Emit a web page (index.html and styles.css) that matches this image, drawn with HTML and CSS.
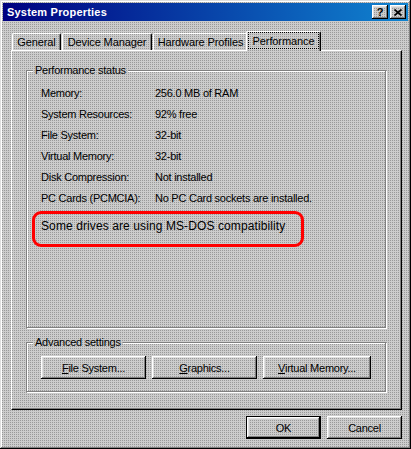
FILE: index.html
```html
<!DOCTYPE html>
<html lang="en">

<head>
	<title>System Properties</title>
	<link rel="stylesheet" href="styles.css">
</head>

<body>
	<div class="window">
		<!-- Title bar -->
		<div class="titlebar">
			<span class="title">System Properties</span>
			<div class="title-buttons">
				<button class="title-btn title-help">?</button>
				<button class="title-btn">
					<svg width="8" height="7" viewBox="0 0 8 7">
						<path d="M0.5 0.5 L7.5 6.5 M7.5 0.5 L0.5 6.5" stroke="#000" stroke-width="1.7" fill="none" />
					</svg>
				</button>
			</div>
		</div>

		<!-- Tabs -->
		<div class="tabs">
			<div class="tab tab-general">General</div>
			<div class="tab tab-device">Device Manager</div>
			<div class="tab tab-hardware">Hardware Profiles</div>
			<div class="tab tab-active"><span class="focus">Performance</span></div>
		</div>

		<!-- Tab panel -->
		<div class="panel">
			<!-- Performance status -->
			<fieldset class="group group-status">
				<legend>Performance status</legend>
				<div class="group-body">
					<div class="status-grid">
						<span>Memory:</span><span>256.0 MB of RAM</span>
						<span>System Resources:</span><span>92% free</span>
						<span>File System:</span><span>32-bit</span>
						<span>Virtual Memory:</span><span>32-bit</span>
						<span>Disk Compression:</span><span>Not installed</span>
						<span>PC Cards (PCMCIA):</span><span>No PC Card sockets are installed.</span>
					</div>
					<div class="notice">Some drives are using MS-DOS compatibility</div>
				</div>
			</fieldset>

			<!-- Advanced settings -->
			<fieldset class="group group-advanced">
				<legend>Advanced settings</legend>
				<div class="group-body btn-row">
					<button class="btn btn-setting"><u>F</u>ile System...</button>
					<button class="btn btn-setting"><u>G</u>raphics...</button>
					<button class="btn btn-setting btn-vm"><u>V</u>irtual Memory...</button>
				</div>
			</fieldset>
		</div>

		<!-- Dialog buttons -->
		<div class="footer">
			<button class="btn btn-dialog btn-default">OK</button>
			<button class="btn btn-dialog">Cancel</button>
		</div>
	</div>
</body>

</html>
```

FILE: styles.css
```css
* {
	box-sizing: border-box;
}

body {
	margin: 0;
	font-family: "Liberation Sans", Arial, sans-serif;
	font-size: 11px;
	letter-spacing: -0.25px;
	color: #000;
}

.window,
.tab-active,
.title-btn,
.group legend {
	background-color: #999999;
	background-image: linear-gradient(to bottom, transparent 1px, #cccccc 1px),
		linear-gradient(to right, transparent 1px, #cccccc 1px);
	background-size: 2px 2px;
	background-attachment: fixed;
}

/* Outer window frame */
.window {
	width: 411px;
	height: 449px;
	padding: 3px;
	box-shadow: inset -1px -1px #000, inset 1px 1px #dfdfdf,
		inset -2px -2px #808080, inset 2px 2px #fff;
}

/* Title bar */
.titlebar {
	display: flex;
	align-items: center;
	justify-content: space-between;
	height: 18px;
	padding: 0 2px 0 4px;
	background: linear-gradient(to right, #000080, #1084d0);
}

.title {
	color: #fff;
	font-weight: bold;
	letter-spacing: 0.2px;
}

.title-buttons {
	display: flex;
	gap: 2px;
}

.title-btn {
	display: flex;
	align-items: center;
	justify-content: center;
	width: 16px;
	height: 14px;
	padding: 0;
	border: 0;
	font-family: inherit;
	font-size: 11px;
	font-weight: bold;
	color: #000;
	box-shadow: inset -1px -1px #000, inset 1px 1px #fff,
		inset -2px -2px #808080, inset 2px 2px #dfdfdf;
}

.title-help {
	padding-bottom: 1px;
}

/* Tabs */
.tabs {
	display: flex;
	align-items: flex-end;
	gap: 1px;
	height: 19px;
	margin: 10px 0 0 9px;
}

.tab {
	display: flex;
	align-items: center;
	justify-content: center;
	height: 17px;
	border-top: 1px solid #fff;
	border-left: 1px solid #fff;
	border-right: 1px solid #000;
	border-radius: 2px 2px 0 0;
	box-shadow: inset -1px 0 #808080;
	letter-spacing: -0.1px;
}

.tab-general {
	width: 49px;
}

.tab-device {
	width: 90px;
}

.tab-hardware {
	width: 95px;
}

.tab-active {
	position: relative;
	z-index: 1;
	width: 75px;
	height: 20px;
	margin: 0 0 -1px -3px;
	padding: 0 1px 2px 1px;
	align-items: stretch;
}

.focus {
	display: flex;
	align-items: center;
	justify-content: center;
	flex: 1;
	border: 1px dotted #000;
}

/* Tab panel */
.panel {
	width: 391px;
	height: 360px;
	margin-left: 8px;
	padding: 13px 0 0 14px;
	border-top: 1px solid #fff;
	border-left: 1px solid #fff;
	border-right: 1px solid #000;
	border-bottom: 1px solid #000;
	box-shadow: inset -1px -1px #808080;
}

/* Etched group boxes */
.group {
	width: 360px;
	margin: 0;
	padding: 0;
	min-width: 0;
	border: 1px solid #808080;
	box-shadow: 1px 1px 0 #fff, inset 1px 1px 0 #fff;
}

.group legend {
	margin-left: 6px;
	padding: 0 2px;
	line-height: 13px;
}

.group-status {
	height: 264px;
}

.group-advanced {
	height: 56px;
	margin-top: 8px;
}

.group-body {
	padding: 5px 0 0 14px;
}

.status-grid {
	display: grid;
	grid-template-columns: 114px auto;
	grid-auto-rows: 21px;
	align-items: center;
}

/* Highlighted warning */
.notice {
	width: 272px;
	height: 36px;
	margin: 3px 0 0 -9px;
	padding: 5px 0 0 6px;
	border: 3px solid #ff0000;
	border-radius: 9px;
	font-size: 12px;
	line-height: 14px;
	letter-spacing: 0.1px;
}

/* Push buttons */
.btn {
	height: 23px;
	padding: 0;
	border: 0;
	background: transparent;
	font-family: inherit;
	font-size: 11px;
	letter-spacing: -0.25px;
	color: #000;
	box-shadow: inset -1px -1px #000, inset 1px 1px #fff,
		inset -2px -2px #808080, inset 2px 2px #dfdfdf;
}

.btn-row {
	display: flex;
	gap: 6px;
	padding-top: 7px;
}

.btn-setting {
	width: 105px;
}

.btn-vm {
	width: 108px;
}

.footer {
	display: flex;
	justify-content: flex-end;
	gap: 6px;
	margin-top: 6px;
	padding-right: 6px;
}

.btn-dialog {
	width: 75px;
}

.btn-default {
	border: 1px solid #000;
}
```
